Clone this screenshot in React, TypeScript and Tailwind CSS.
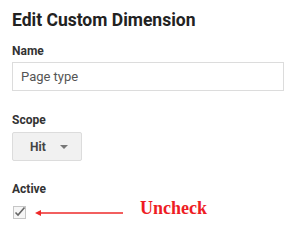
export default function App() {
  return (
    <div className="h-[251px] w-[300px] bg-white px-3 font-['Roboto',sans-serif]">
      <h1 className="pt-[9px] text-[17.5px] font-bold leading-[22px] text-[#222]">Edit Custom Dimension</h1>

      <label className="mt-[13px] block text-[12px] font-bold leading-[14px] text-[#333]">Name</label>
      <div className="mt-[4px] flex h-[29px] w-[272px] items-center border border-[#dcdcdc] px-[8px] text-[13px] text-[#555]">
        Page type
      </div>

      <div className="mt-[22px] text-[12px] font-bold leading-[14px] text-[#333]">Scope</div>
      <button className="mt-[5px] flex h-[29px] w-[70px] items-center rounded-[2px] border border-[#dcdcdc] bg-[#f1f1f1] pl-[17px] text-[12px] font-bold text-[#444]">
        Hit
        <span className="ml-[14px] h-0 w-0 border-x-[4px] border-t-[4px] border-x-transparent border-t-[#777]" />
      </button>

      <div className="mt-[21px] text-[12px] font-bold leading-[14px] text-[#333]">Active</div>
      <div className="mt-[7px] flex items-center">
        <div className="ml-px flex h-[13px] w-[13px] items-center justify-center border border-[#c6c6c6] bg-[#f6f6f6]">
          <svg width="13" height="13" viewBox="0 0 13 13" className="shrink-0">
            <path d="M2.5 6.5 L5 9 L11.5 1.5" fill="none" stroke="#666" strokeWidth="1.6" />
          </svg>
        </div>
        <svg width="90" height="8" viewBox="0 0 90 8" className="ml-[9px]">
          <path d="M0 4 L6 1 L6 7 Z" fill="#ee2a2a" />
          <line x1="4" y1="4" x2="88" y2="4" stroke="#ee2a2a" strokeWidth="1.5" />
        </svg>
        <span className="-mt-[8px] ml-[15px] font-['Liberation_Serif',serif] text-[18px] font-bold text-[#ee1c24]">
          Uncheck
        </span>
      </div>
    </div>
  );
}
